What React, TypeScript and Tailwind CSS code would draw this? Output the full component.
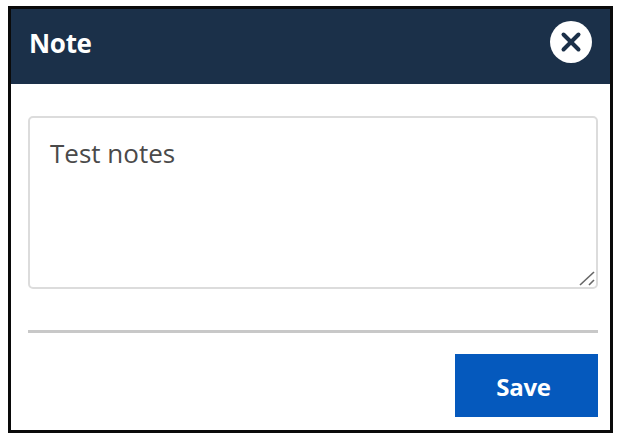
import { X } from 'lucide-react'

export default function App() {
  return (
    <div className="min-h-[441px] bg-white pl-2 pt-[6px] font-['Open_Sans',sans-serif]">
      <div className="flex h-[427px] w-[605px] flex-col border-[3px] border-[#0a0a0a] bg-white">
        <header className="flex h-[75px] shrink-0 items-center justify-between bg-[#1b3049] pb-[9px] pl-[18px] pr-[18px]">
          <h1 className="pt-[3px] text-[26px] font-bold tracking-[-0.3px] text-white">Note</h1>
          <button className="flex h-[42px] w-[42px] items-center justify-center rounded-full bg-white text-[#1b3049]">
            <X size={30} strokeWidth={3.2} />
          </button>
        </header>
        <div className="flex flex-1 flex-col pl-[17px] pr-[12px] pt-[32px]">
          <div className="relative h-[173px]">
            <textarea
              defaultValue="Test notes"
              className="h-full w-full resize-none rounded-[5px] border-2 border-[#dcdcdc] px-5 py-[17px] text-[26px] leading-[36px] text-[#4a4a4a] outline-none"
            />
            <svg className="absolute bottom-[3px] right-[3px] h-4 w-4" viewBox="0 0 16 16" fill="none" stroke="#666666" strokeWidth="1.6">
              <path d="M1 15 L15 2" />
              <path d="M10 15 L15 10" />
            </svg>
          </div>
          <div className="mt-[41px] h-[3px] bg-[#c8c8c8]" />
          <div className="mt-[21px] flex justify-end">
            <button className="h-[63px] w-[143px] bg-[#0559bd] pr-[6px] pt-[2px] text-[24px] font-bold tracking-[-0.3px] text-white">Save</button>
          </div>
        </div>
      </div>
    </div>
  )
}
